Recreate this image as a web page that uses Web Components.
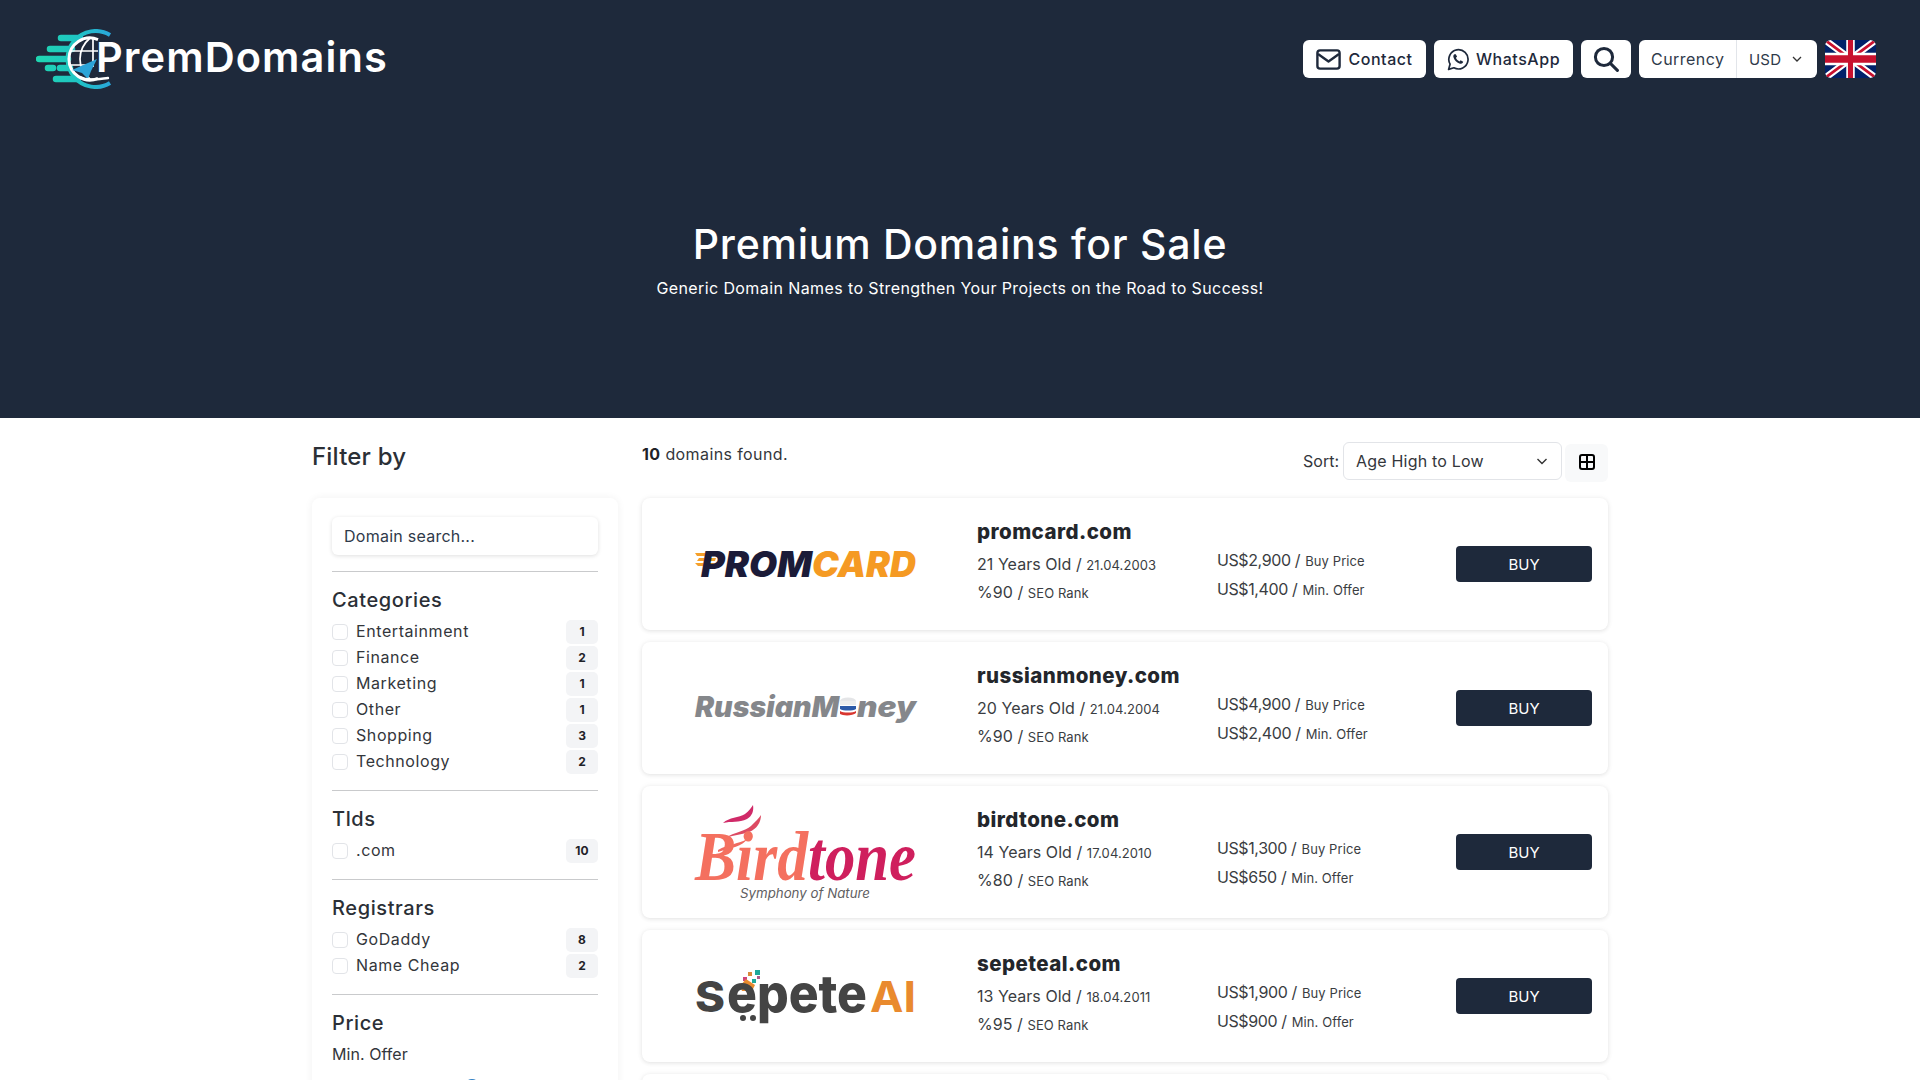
<!DOCTYPE html>
<html lang="en">
<head>
<meta charset="utf-8">
<title>PremDomains</title>
<style>
    html, body { margin: 0; height: 1080px; overflow: hidden; background: #fff; }
    body { font-family: Inter, "Liberation Sans", sans-serif; color: #2b2f36; }
</style>
</head>
<body>
<site-header></site-header>
<page-main></page-main>

<script>
class SiteLogo extends HTMLElement {
    constructor() {
        super();
        this.attachShadow({mode: "open"}).innerHTML = `
        <style>
            :host { display: flex; align-items: center; height: 60px; margin-top: -11px; }
            svg { width: 76px; height: 60px; margin-right: -12px; flex: none; }
            span { font-size: 41.5px; font-weight: 600; color: #fff; letter-spacing: 1.1px; position: relative; top: -2px; left: -4px; }
        </style>
        <svg viewBox="0 0 76 60" fill="none">
            <defs>
                <linearGradient id="g" x1="0" y1="0" x2="76" y2="0" gradientUnits="userSpaceOnUse">
                    <stop offset="0" stop-color="#1fd6b0"/><stop offset=".55" stop-color="#1fc4c4"/><stop offset="1" stop-color="#2aa5dc"/>
                </linearGradient>
            </defs>
            <g stroke="url(#g)" stroke-width="6.5" stroke-linecap="round">
                <path d="M25 9H44M14 20H36M3 30H32M12 39H17M24 39H34M20 50H42"/>
            </g>
            <path d="M74 6A28 28 0 1 0 74 54" stroke="url(#g)" stroke-width="4"/>
            <path d="M62 10.6A21 21 0 1 0 62 49.4" stroke="#fff" stroke-width="3"/>
            <path d="M54 9C46 16 44 24 44 30S46 44 54 50M35 22H62M34 36H56M57 8V38" stroke="#fff" stroke-width="1.7"/>
            <path d="M61 30L36 41L46 44L52 50L55 42Z" fill="#2ca4d8"/>
            <path d="M44 48C52 52 62 50 72 49" stroke="#fff" stroke-width="2.4" stroke-linecap="round"/>
        </svg>
        <span>PremDomains</span>`;
    }
}

class NavButton extends HTMLElement {
    constructor() {
        super();
        this.attachShadow({mode: "open"}).innerHTML = `
        <style>
            :host {
                display: inline-flex; align-items: center; justify-content: center; gap: 7px;
                height: 38px; box-sizing: border-box;
                background: #fff; border-radius: 6px; color: #1e293b;
                font-size: 16px; font-weight: 500; letter-spacing: .55px;
            }
            ::slotted(svg) { flex: none; display: block; }
        </style>
        <slot></slot>`;
        this.style.width = this.getAttribute("width") + "px";
    }
}

class CurrencySelect extends HTMLElement {
    constructor() {
        super();
        this.attachShadow({mode: "open"}).innerHTML = `
        <style>
            :host {
                display: flex; height: 38px; width: 178px; box-sizing: border-box;
                background: #fff; border-radius: 6px; color: #2f3a4a; font-size: 16px; letter-spacing: .45px;
            }
            .label { width: 97px; padding-left: 12px; box-sizing: border-box; display: flex; align-items: center; }
            .val { flex: 1; border-left: 1px solid #e2e5ea; display: flex; align-items: center; padding-left: 12px; gap: 10px; font-size: 15px; letter-spacing: .2px; }
        </style>
        <div class="label">Currency</div>
        <div class="val">USD
            <svg width="12" height="12" viewBox="0 0 12 12" fill="none" stroke="#333" stroke-width="1.3"><path d="M2 4l4 4 4-4"/></svg>
        </div>`;
    }
}

class SiteHeader extends HTMLElement {
    constructor() {
        super();
        this.attachShadow({mode: "open"}).innerHTML = `
        <style>
            :host { display: block; height: 418px; background: #1e293b; color: #fff; box-sizing: border-box; padding-top: 40px; }
            .top { display: flex; justify-content: space-between; align-items: flex-start; padding: 0 44px 0 36px; height: 38px; }
            .nav { display: flex; gap: 8px; }
            .flag { width: 51px; height: 38px; border-radius: 6px; overflow: hidden; display: block; }
            .flag svg { display: block; width: 100%; height: 100%; }
            .hero { text-align: center; margin-top: 136px; }
            h1 { margin: 0; font-size: 41px; line-height: 60px; font-weight: 500; letter-spacing: .75px; }
            p { margin: 2px 0 0; font-size: 16px; line-height: 24px; letter-spacing: .4px; }
        </style>
        <div class="top">
            <site-logo></site-logo>
            <div class="nav">
                <nav-button width="123">
                    <svg width="25" height="21" viewBox="0 0 25 21" fill="none" stroke="#1e293b" stroke-width="2.4" stroke-linejoin="round"><rect x="1.4" y="1.4" width="22.2" height="18.2" rx="2.6"/><path d="M2 5l10.5 7.5L23 5"/></svg>
                    Contact
                </nav-button>
                <nav-button width="139">
                    <svg width="22" height="23" viewBox="0 0 22 23" fill="none" stroke="#1e293b" stroke-width="1.7"><path d="M1.6 21.4l1.5-5.3A9.6 9.6 0 1 1 6.9 19.8z" stroke-linejoin="round"/><path d="M7.4 6.2c-.9.6-1.3 1.6-1 2.8.7 2.9 3.6 5.9 6.6 6.7 1.2.3 2.2-.1 2.8-1l.4-1-2.6-1.4-1 1.2c-1.6-.6-3-2-3.7-3.7l1.2-1-1.3-2.6z" fill="#1e293b" stroke="none"/></svg>
                    WhatsApp
                </nav-button>
                <nav-button width="50">
                    <svg width="26" height="26" viewBox="0 0 26 26" fill="none" stroke="#1e293b" stroke-width="3"><circle cx="11" cy="11" r="8.6"/><path d="M17.4 17.4l7 7" stroke-linecap="round"/></svg>
                </nav-button>
                <currency-select></currency-select>
                <span class="flag">
                    <svg viewBox="0 0 60 30" preserveAspectRatio="none">
                        <rect width="60" height="30" fill="#012169"/>
                        <path d="M0 0L60 30M60 0L0 30" stroke="#fff" stroke-width="6"/>
                        <path d="M0 0L60 30M60 0L0 30" stroke="#c8102e" stroke-width="2.4"/>
                        <path d="M30 0V30M0 15H60" stroke="#fff" stroke-width="10"/>
                        <path d="M30 0V30M0 15H60" stroke="#c8102e" stroke-width="6"/>
                    </svg>
                </span>
            </div>
        </div>
        <div class="hero">
            <h1>Premium Domains for Sale</h1>
            <p>Generic Domain Names to Strengthen Your Projects on the Road to Success!</p>
        </div>`;
    }
}

class FilterGroup extends HTMLElement {
    constructor() {
        super();
        this.attachShadow({mode: "open"}).innerHTML = `
        <style>
            :host { display: block; padding: 13px 0 16px; border-top: 1px solid #c9cacc; }
            h3 { margin: 0 0 5px; font-size: 20px; line-height: 30px; font-weight: 500; color: #2b2f36; letter-spacing: .6px; }
            .list { display: flex; flex-direction: column; gap: 2px; }
        </style>
        <h3>${this.getAttribute("heading")}</h3>
        <div class="list"><slot></slot></div>`;
    }
}

class FilterItem extends HTMLElement {
    constructor() {
        super();
        this.attachShadow({mode: "open"}).innerHTML = `
        <style>
            :host { display: flex; align-items: center; height: 24px; font-size: 16px; color: #33363b; letter-spacing: .58px; }
            .box { width: 14px; height: 14px; border: 1px solid #e2e4e8; border-radius: 4px; margin-right: 8px; flex: none; background: #fff; }
            .name { flex: 1; padding-bottom: 2px; }
            .count { width: 32px; height: 24px; border-radius: 5px; background: #f3f4f6; color: #1f2228; font-size: 12px; font-weight: 700; display: flex; align-items: center; justify-content: center; letter-spacing: 0; padding-bottom: 1px; box-sizing: border-box; }
        </style>
        <span class="box"></span>
        <span class="name"><slot></slot></span>
        <span class="count">${this.getAttribute("count")}</span>`;
    }
}

class PriceFilter extends HTMLElement {
    constructor() {
        super();
        this.attachShadow({mode: "open"}).innerHTML = `
        <style>
            :host { display: block; margin-top: -1px; font-size: 16px; line-height: 24px; color: #33363b; letter-spacing: .05px; }
            .slider { position: relative; height: 4px; background: #e5e7eb; border-radius: 2px; margin-top: 19px; }
            .slider i { position: absolute; left: 132px; top: -6px; width: 16px; height: 16px; border-radius: 50%; background: #2f7fc4; }
        </style>
        <div>Min. Offer</div>
        <div class="slider"><i></i></div>`;
    }
}

class FilterPanel extends HTMLElement {
    constructor() {
        super();
        this.attachShadow({mode: "open"}).innerHTML = `
        <style>
            :host {
                display: block; background: #fff; border-radius: 8px; padding: 19px 20px 24px;
                box-shadow: 0 0 8px rgba(0,0,0,.06);
            }
            .search {
                height: 38px; border-radius: 6px; padding-left: 12px; display: flex; align-items: center;
                font-size: 16px; color: #2f3a4a; letter-spacing: .25px; margin-bottom: 16px;
                box-shadow: 0 1px 4px rgba(0,0,0,.13);
            }
        </style>
        <div class="search">Domain search...</div>
        <filter-group heading="Categories">
            <filter-item count="1">Entertainment</filter-item>
            <filter-item count="2">Finance</filter-item>
            <filter-item count="1">Marketing</filter-item>
            <filter-item count="1">Other</filter-item>
            <filter-item count="3">Shopping</filter-item>
            <filter-item count="2">Technology</filter-item>
        </filter-group>
        <filter-group heading="Tlds">
            <filter-item count="10">.com</filter-item>
        </filter-group>
        <filter-group heading="Registrars">
            <filter-item count="8">GoDaddy</filter-item>
            <filter-item count="2">Name Cheap</filter-item>
        </filter-group>
        <filter-group heading="Price">
            <price-filter></price-filter>
        </filter-group>`;
    }
}

const LOGOS = {
    promcard: `
        <g fill="#f5a02a"><path d="M0 2h24l-2 3H2zM4 7h17l-1 3H2zM0 12h19l-1 3H3z"/></g>
        <text x="6" y="26" font-family="Inter" font-weight="900" font-style="italic" font-size="35" fill="#1b1b38" textLength="111" lengthAdjust="spacingAndGlyphs">PROM</text>
        <text x="117" y="26" font-family="Inter" font-weight="900" font-style="italic" font-size="35" fill="#f59a23" textLength="104" lengthAdjust="spacingAndGlyphs">CARD</text>`,
    russianmoney: `
        <text x="0" y="26" font-family="Inter" font-weight="900" font-style="italic" font-size="28" fill="#85878b" textLength="144" lengthAdjust="spacingAndGlyphs">RussianM</text>
        <ellipse cx="153" cy="10" rx="8" ry="3.5" fill="#e4e5e7"/>
        <rect x="145" y="10" width="16" height="4" fill="#eceded"/>
        <path d="M145 15h16v3c-3 2-13 2-16 0z" fill="#2c5aa8"/>
        <path d="M145 20c3 2 13 2 16 0v2c-3 3-13 3-16 1z" fill="#d8362f"/>
        <text x="162" y="26" font-family="Inter" font-weight="900" font-style="italic" font-size="28" fill="#85878b" textLength="59" lengthAdjust="spacingAndGlyphs">ney</text>`,
    birdtone: `
        <path d="M28 19C34 13 44 14 50 10C54 7 56 4 58 1C59 7 57 12 52 15C44 19 36 17 28 19Z" fill="#d02a68"/>
        <path d="M30 34C40 28 50 27 56 22C60 18 64 14 66 11C66 18 62 25 54 28C46 31 38 31 30 34Z" fill="#dd4a62"/>
        <path d="M23 46C33 40 44 40 52 35C48 42 36 44 23 48Z" fill="#ef6a60"/>
        <text x="0" y="76" font-family="Liberation Serif" font-weight="700" font-style="italic" font-size="70" fill="#f4705f" textLength="113" lengthAdjust="spacingAndGlyphs">Bird</text>
        <text x="113" y="76" font-family="Liberation Serif" font-weight="700" font-style="italic" font-size="70" fill="#cf1f5d" textLength="108" lengthAdjust="spacingAndGlyphs">tone</text>
        <text x="45" y="94" font-family="Inter" font-style="italic" font-size="13" fill="#5f6062" textLength="130" lengthAdjust="spacingAndGlyphs">Symphony of Nature</text>`,
    sepete: `
        <rect x="60" y="5" width="5" height="5" fill="#1fa89a"/>
        <rect x="53" y="7" width="4" height="4" fill="#d98a3c"/>
        <rect x="57" y="14" width="4" height="4" fill="#1fa89a"/>
        <rect x="48" y="12" width="4" height="4" fill="#d0457b"/>
        <rect x="62" y="11" width="3" height="3" fill="#b05a8a"/>
        <path d="M45 21l6-7 9 6-3 6H47z" fill="#e98a2e"/>
        <text x="0" y="47" font-family="Inter" font-weight="800" font-size="42" fill="#444" textLength="30" lengthAdjust="spacingAndGlyphs">S</text>
        <text x="32" y="47" font-family="Inter" font-weight="800" font-size="52" fill="#444" textLength="140" lengthAdjust="spacingAndGlyphs">epete</text>
        <text x="175" y="47" font-family="Inter" font-weight="700" font-size="42" fill="#e98a2e" textLength="46" lengthAdjust="spacingAndGlyphs">AI</text>
        <circle cx="48" cy="53" r="3" fill="#444"/><circle cx="58" cy="53" r="3" fill="#444"/>`
};

const LOGO_SIZE = {
    promcard: [221, 30, 53],
    russianmoney: [221, 36, 49],
    birdtone: [221, 100, 18],
    sepete: [221, 62, 35]
};

class BrandLogo extends HTMLElement {
    connectedCallback() {
        const kind = this.getAttribute("kind");
        const [w, h, top] = LOGO_SIZE[kind];
        this.attachShadow({mode: "open"}).innerHTML = `
        <style>
            :host { display: block; padding-top: ${top}px; }
            svg { display: block; overflow: visible; }
        </style>
        <svg width="${w}" height="${h}" viewBox="0 0 ${w} ${h}">${LOGOS[kind]}</svg>`;
    }
}

class DomainCard extends HTMLElement {
    connectedCallback() {
        const a = n => this.getAttribute(n);
        const root = this.attachShadow({mode: "open"});
        const css = `<style>
            :host {
                display: grid; grid-template-columns: 335px 240px 239px 136px;
                height: 132px; box-sizing: border-box; padding-right: 16px;
                background: #fff; border-radius: 8px;
                box-shadow: 0 1px 4px rgba(0,0,0,.1), 0 0 8px rgba(0,0,0,.03);
            }
            .logo { padding-left: 53px; }
            .info { padding-top: 19px; }
            .info .line + .line { margin-top: -1px; }
            .price { padding-top: 48px; }
            .price .line { letter-spacing: -.4px; }
            .price small { letter-spacing: .15px; margin-left: 1px; }
            h2 { margin: 0 0 3px; font-size: 20.5px; line-height: 30px; font-weight: 800; color: #23262b; letter-spacing: .45px; }
            .line { font-size: 16px; line-height: 28px; color: #3a3d42; letter-spacing: .05px; white-space: nowrap; }
            .line small { font-size: 13px; letter-spacing: .1px; }
            .buy { padding-top: 48px; }
            .buy div { height: 36px; border-radius: 4px; background: #1e293b; color: #fff; font-size: 15px; font-weight: 400; display: flex; align-items: center; justify-content: center; }
        </style>`;
        if (!a("name")) {
            root.innerHTML = css;
            return;
        }
        root.innerHTML = css + `
        <div class="logo"><brand-logo kind="${a("logo")}"></brand-logo></div>
        <div class="info">
            <h2>${a("name")}</h2>
            <div class="line">${a("age")} Years Old / <small>${a("date")}</small></div>
            <div class="line">%${a("rank")} / <small>SEO Rank</small></div>
        </div>
        <div class="price">
            <div class="line">US$${a("buy")} / <small>Buy Price</small></div>
            <div class="line">US$${a("min")} / <small>Min. Offer</small></div>
        </div>
        <div class="buy"><div>BUY</div></div>`;
    }
}

class ResultsToolbar extends HTMLElement {
    constructor() {
        super();
        this.attachShadow({mode: "open"}).innerHTML = `
        <style>
            :host { display: flex; justify-content: space-between; height: 80px; box-sizing: border-box; padding-top: 24px; font-size: 16px; color: #33363b; }
            .count { line-height: 24px; letter-spacing: .4px; }
            .count b { color: #1f2228; }
            .sort { display: flex; align-items: flex-start; }
            .lbl { line-height: 38px; margin-right: 4px; }
            .sel {
                width: 219px; height: 38px; box-sizing: border-box; border: 1px solid #e2e4e8; border-radius: 6px;
                padding: 0 12px; display: flex; align-items: center; justify-content: space-between; letter-spacing: .2px;
            }
            .grid { width: 43px; height: 38px; margin: 2px 0 0 3px; padding-bottom: 2px; box-sizing: border-box; border-radius: 6px; background: #f8f9fa; display: flex; align-items: center; justify-content: center; }
        </style>
        <div class="count"><b>10</b> domains found.</div>
        <div class="sort">
            <span class="lbl">Sort:</span>
            <div class="sel">Age High to Low
                <svg width="14" height="14" viewBox="0 0 14 14" fill="none" stroke="#333" stroke-width="1.4"><path d="M2.5 5l4.5 4.5L11.5 5"/></svg>
            </div>
            <div class="grid">
                <svg width="16" height="16" viewBox="0 0 16 16" fill="none" stroke="#000" stroke-width="2"><rect x="1" y="1" width="14" height="14" rx="2"/><path d="M8 1v14M1 8h14"/></svg>
            </div>
        </div>`;
    }
}

class PageMain extends HTMLElement {
    constructor() {
        super();
        this.attachShadow({mode: "open"}).innerHTML = `
        <style>
            :host { display: grid; grid-template-columns: 306px 966px; gap: 24px; width: 1296px; margin: 0 auto; }
            h2 { margin: 0; padding-top: 21px; height: 59px; font-size: 24px; line-height: 36px; font-weight: 500; color: #2b2f36; letter-spacing: .2px; }
            .list { display: flex; flex-direction: column; gap: 12px; }
        </style>
        <aside>
            <h2>Filter by</h2>
            <filter-panel></filter-panel>
        </aside>
        <section>
            <results-toolbar></results-toolbar>
            <div class="list">
                <domain-card logo="promcard" name="promcard.com" age="21" date="21.04.2003" rank="90" buy="2,900" min="1,400"></domain-card>
                <domain-card logo="russianmoney" name="russianmoney.com" age="20" date="21.04.2004" rank="90" buy="4,900" min="2,400"></domain-card>
                <domain-card logo="birdtone" name="birdtone.com" age="14" date="17.04.2010" rank="80" buy="1,300" min="650"></domain-card>
                <domain-card logo="sepete" name="sepeteal.com" age="13" date="18.04.2011" rank="95" buy="1,900" min="900"></domain-card>
                <domain-card></domain-card>
            </div>
        </section>`;
    }
}

customElements.define("site-logo", SiteLogo);
customElements.define("nav-button", NavButton);
customElements.define("currency-select", CurrencySelect);
customElements.define("site-header", SiteHeader);
customElements.define("filter-group", FilterGroup);
customElements.define("filter-item", FilterItem);
customElements.define("price-filter", PriceFilter);
customElements.define("filter-panel", FilterPanel);
customElements.define("brand-logo", BrandLogo);
customElements.define("domain-card", DomainCard);
customElements.define("results-toolbar", ResultsToolbar);
customElements.define("page-main", PageMain);
</script>
</body>
</html>
